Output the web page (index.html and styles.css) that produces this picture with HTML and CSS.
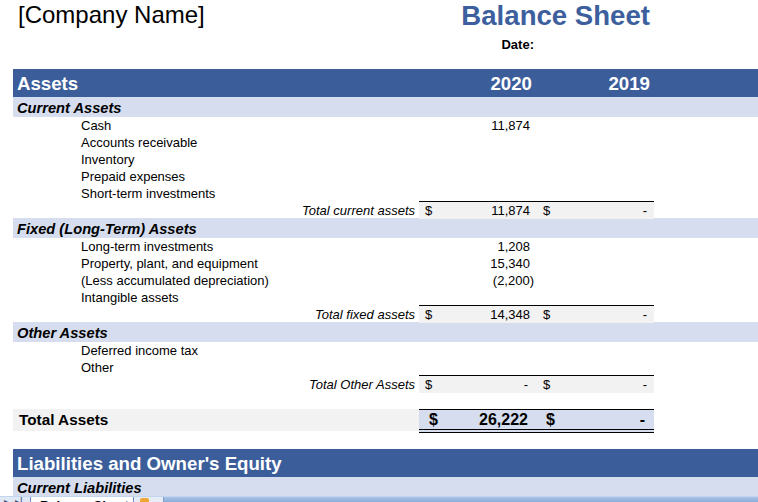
FILE: index.html
```html
<!DOCTYPE html>
<html lang="en">
<head>
<meta charset="utf-8">
<title>Balance Sheet</title>
<link rel="stylesheet" href="styles.css">
</head>
<body>
<div class="sheet">
  <header class="top">
    <div class="company">[Company Name]</div>
    <div class="title">Balance Sheet</div>
    <div class="date">Date:</div>
  </header>

  <div class="row hdr"><div class="a">Assets</div><div class="b yr">2020</div><div class="c yr">2019</div></div>
  <div class="row sec"><div class="a">Current Assets</div><div></div><div></div></div>
  <div class="row item"><div class="a">Cash</div><div class="b num">11,874</div><div></div></div>
  <div class="row item"><div class="a">Accounts receivable</div><div></div><div></div></div>
  <div class="row item"><div class="a">Inventory</div><div></div><div></div></div>
  <div class="row item"><div class="a">Prepaid expenses</div><div></div><div></div></div>
  <div class="row item last"><div class="a">Short-term investments</div><div></div><div></div></div>
  <div class="row tot"><div class="a">Total current assets</div><div class="b"><span>$</span><span class="pv">11,874</span></div><div class="c"><span>$</span><span class="dash">-</span></div></div>

  <div class="row sec"><div class="a">Fixed (Long-Term) Assets</div><div></div><div></div></div>
  <div class="row item"><div class="a">Long-term investments</div><div class="b num">1,208</div><div></div></div>
  <div class="row item"><div class="a">Property, plant, and equipment</div><div class="b num">15,340</div><div></div></div>
  <div class="row item"><div class="a">(Less accumulated depreciation)</div><div class="b num neg">(2,200)</div><div></div></div>
  <div class="row item last"><div class="a">Intangible assets</div><div></div><div></div></div>
  <div class="row tot"><div class="a">Total fixed assets</div><div class="b"><span>$</span><span class="pv">14,348</span></div><div class="c"><span>$</span><span class="dash">-</span></div></div>

  <div class="row sec"><div class="a">Other Assets</div><div></div><div></div></div>
  <div class="row item"><div class="a">Deferred income tax</div><div></div><div></div></div>
  <div class="row item last"><div class="a">Other</div><div></div><div></div></div>
  <div class="row tot"><div class="a">Total Other Assets</div><div class="b"><span>$</span><span class="bdash">-</span></div><div class="c"><span>$</span><span class="dash">-</span></div></div>

  <div class="gap17"></div>
  <div class="row grand"><div class="a">Total Assets</div><div class="b"><span>$</span><span>26,222</span></div><div class="c"><span>$</span><span>-</span></div></div>
  <div class="gap16"></div>

  <div class="row hdr"><div class="a">Liabilities and Owner's Equity</div><div></div><div></div></div>
  <div class="row sec"><div class="a">Current Liabilities</div><div></div><div></div></div>
</div>
<footer class="tabs">
  <div class="nav"><span>&#9656;</span><span>&#9656;|</span></div>
  <div class="tab">Balance Sheet</div>
  <div class="newtab"><span class="ico"></span></div>
  <div class="rest"></div>
</footer>
</body>
</html>
```
FILE: styles.css
```css
html, body {
  margin: 0;
  padding: 0;
}
body {
  width: 758px;
  height: 502px;
  overflow: hidden;
  background: #fff;
  color: #000;
  font-family: "Liberation Sans", Arial, sans-serif;
  font-size: 13px;
}
.sheet {
  height: 496px;
  overflow: hidden;
  padding-left: 13px;
  box-sizing: border-box;
}
.top {
  display: grid;
  grid-template-columns: 406px 118px 117px;
  grid-template-rows: 36px 17px 16px;
}
.company {
  grid-column: 1;
  grid-row: 1;
  font-size: 24px;
  line-height: 28px;
  padding: 1px 0 0 5px;
  white-space: nowrap;
}
.title {
  grid-column: 2 / 4;
  grid-row: 1;
  text-align: right;
  font-size: 27.6px;
  font-weight: bold;
  color: #3d5f9d;
  line-height: 30px;
  padding: 1px 4px 0 0;
  white-space: nowrap;
}
.date {
  grid-column: 2;
  grid-row: 2;
  text-align: right;
  font-weight: bold;
  font-size: 13px;
  line-height: 17px;
  padding-right: 3px;
}
.row {
  display: grid;
  grid-template-columns: 406px 118px 117px;
  box-sizing: border-box;
  white-space: nowrap;
}
.hdr {
  height: 28px;
  padding-top: 2px;
  background: #3b5e9b;
  color: #fff;
  font-weight: bold;
  font-size: 18.67px;
  line-height: 26px;
}
.hdr .a { padding-left: 4px; }
.hdr .yr { text-align: right; }
.hdr .b { padding-right: 5px; }
.hdr .c { padding-right: 4px; }
.sec {
  height: 20px;
  padding-top: 2px;
  background: #d5ddee;
  font-weight: bold;
  font-style: italic;
  font-size: 14.67px;
  line-height: 18px;
}
.sec .a { padding-left: 4px; }
.item {
  height: 17px;
  line-height: 17px;
}
.item.last { height: 16px; }
.item .a { padding-left: 68px; }
.num {
  text-align: right;
  padding-right: 7px;
}
.num.neg { padding-right: 3px; }
.tot {
  height: 17px;
  line-height: 16px;
}
.tot .a {
  font-style: italic;
  text-align: right;
  padding: 2px 4px 0 0;
}
.tot .b, .tot .c {
  display: flex;
  justify-content: space-between;
  background: #f2f2f2;
  border-top: 1px solid #000;
  padding: 1px 7px 0 6px;
}
.tot .b .bdash { padding-right: 2px; }
.gap17 { height: 17px; }
.gap16 { height: 16px; }
.grand {
  height: 24px;
}
.grand .a {
  background: #f2f2f2;
  height: 22px;
  font-weight: bold;
  font-size: 15.3px;
  line-height: 22px;
  padding-left: 6px;
}
.grand .b, .grand .c {
  display: flex;
  justify-content: space-between;
  background: #d5ddee;
  border-top: 1px solid #000;
  border-bottom: 4px double #000;
  font-weight: bold;
  font-size: 16px;
  line-height: 18px;
  padding-top: 1px;
}
.grand .b { padding-left: 10px; padding-right: 9px; }
.grand .c { padding-left: 9px; padding-right: 9px; }
.tabs {
  display: flex;
  height: 6px;
  overflow: hidden;
  background: linear-gradient(#a8c3e6, #8daed9);
  border-top: 1px solid #c3d5ee;
  box-sizing: border-box;
}
.nav {
  width: 30px;
  display: flex;
  gap: 6px;
  padding-left: 4px;
  box-sizing: border-box;
  background: #dfe8f4;
  font-size: 10px;
  line-height: 10px;
  color: #3a4f72;
}
.tab {
  width: 104px;
  padding-left: 9px;
  padding-top: 2px;
  box-sizing: border-box;
  background: #fff;
  border-left: 1px solid #6f8fbf;
  border-right: 1px solid #6f8fbf;
  font-weight: bold;
  font-size: 13px;
  line-height: 13px;
  white-space: nowrap;
}
.newtab {
  width: 30px;
  background: #e6edf7;
  border-right: 1px solid #7f9dc8;
  padding-left: 6px;
  box-sizing: border-box;
}
.ico {
  display: block;
  width: 9px;
  height: 6px;
  margin-top: 1px;
  background: #f1a534;
  border-radius: 2px 2px 0 0;
}
.rest { flex: 1; }
```
